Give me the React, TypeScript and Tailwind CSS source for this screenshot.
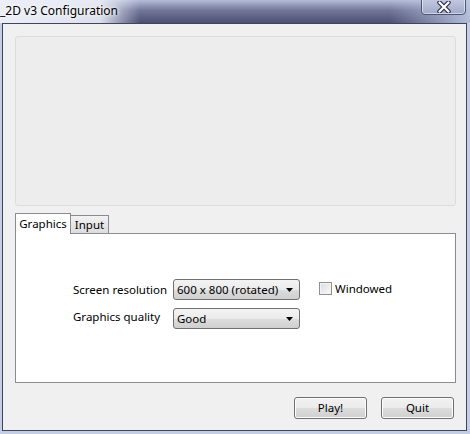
import React from "react";

const font = "font-['Noto_Sans','Liberation_Sans',sans-serif]";

const ComboBox = ({ value }: { value: string }) => (
  <div className="flex h-[21px] w-[127px] items-center justify-between rounded-[3px] border border-[#707070] bg-[linear-gradient(to_bottom,#f3f3f3_0%,#ebebeb_50%,#dddddd_51%,#cfcfcf_100%)] pl-[3px] pr-[6px] text-[11.5px] text-black">
    <span>{value}</span>
    <svg width="7" height="4" viewBox="0 0 7 4">
      <path d="M0 0h7L3.5 4z" fill="#000" />
    </svg>
  </div>
);

const Button = ({ label }: { label: string }) => (
  <button className="h-[22px] w-[73px] rounded-[3px] border border-[#707070] bg-[linear-gradient(to_bottom,#f2f2f2_0%,#ebebeb_50%,#dddddd_51%,#cfcfcf_100%)] text-[11.5px] text-black shadow-[inset_0_0_0_1px_#fcfcfc]">
    {label}
  </button>
);

export default function App() {
  return (
    <div className={`flex h-[434px] w-[470px] flex-col bg-[#c3cde3] ${font}`}>
      {/* title bar */}
      <div className="relative h-[23px] shrink-0 bg-[linear-gradient(to_right,rgba(236,239,247,1)_0px,rgba(236,239,247,0.9)_100px,rgba(236,239,247,0)_140px),linear-gradient(to_left,rgba(190,200,226,0.9)_0px,rgba(190,200,226,0)_80px),linear-gradient(to_bottom,#b4bcd8_0%,#72779a_45%,#4b4f73_100%)]">
        <span className="absolute left-0 top-[2px] text-[12px] leading-[18px] text-black [text-shadow:0_0_6px_#fff,0_0_3px_#fff]">
          _2D v3 Configuration
        </span>
        <div className="absolute right-[4px] top-[-3px] flex h-[18px] w-[45px] items-center justify-center rounded-b-[4px] border border-[#4e5572] bg-[linear-gradient(to_bottom,#c5cce2,#a0a9c8)] shadow-[inset_0_0_0_1px_rgba(255,255,255,0.5)]">
          <svg width="14" height="12" viewBox="0 0 14 12" className="mt-[2px]">
            <path d="M2.5 1.5l9 9M11.5 1.5l-9 9" stroke="#2e3348" strokeWidth="4.5" strokeLinecap="round" />
            <path d="M2.5 1.5l9 9M11.5 1.5l-9 9" stroke="#fff" strokeWidth="2.2" strokeLinecap="round" />
          </svg>
        </div>
      </div>

      {/* client area */}
      <div className="ml-[2px] mr-[3px] mb-[3px] flex flex-1 flex-col border border-[#3e4560] bg-[#f0f0f0] px-[12px] pt-[12px]">
        <div className="h-[170px] w-[441px] rounded-[3px] border border-[#dcdcdc] bg-[#ededed]" />

        {/* tabs */}
        <div className="mt-[6px] flex h-[21px] items-end">
          <div className="relative z-10 -mb-px flex h-[21px] w-[56px] items-start justify-center border border-b-0 border-[#898c95] bg-white pt-[1px] text-[11.5px]">
            Graphics
          </div>
          <div className="flex h-[18px] w-[38px] items-center justify-center border border-l-0 border-b-0 border-[#898c95] bg-[linear-gradient(to_bottom,#f2f2f2,#dcdcdc)] text-[11.5px]">
            Input
          </div>
        </div>
        <div className="flex h-[150px] w-[441px] flex-col border border-[#898c95] bg-white pl-[57px] pt-[45px] text-[11.5px] text-black">
          <div className="flex items-center">
            <span className="w-[100px]">Screen resolution</span>
            <ComboBox value="600 x 800 (rotated)" />
            <div className="ml-[19px] flex items-center gap-[3px] self-start pt-[1px]">
              <div className="h-[13px] w-[13px] border border-[#8f8f8f] bg-[linear-gradient(to_bottom_right,#dcdcdc,#fafafa)] shadow-[inset_0_0_0_1px_#f4f4f4]" />
              <span>Windowed</span>
            </div>
          </div>
          <div className="mt-[8px] flex items-center">
            <span className="w-[100px] -mt-[4px]">Graphics quality</span>
            <ComboBox value="Good" />
          </div>
        </div>

        {/* buttons */}
        <div className="mt-[14px] flex justify-end gap-[14px]">
          <Button label="Play!" />
          <Button label="Quit" />
        </div>
      </div>
    </div>
  );
}
